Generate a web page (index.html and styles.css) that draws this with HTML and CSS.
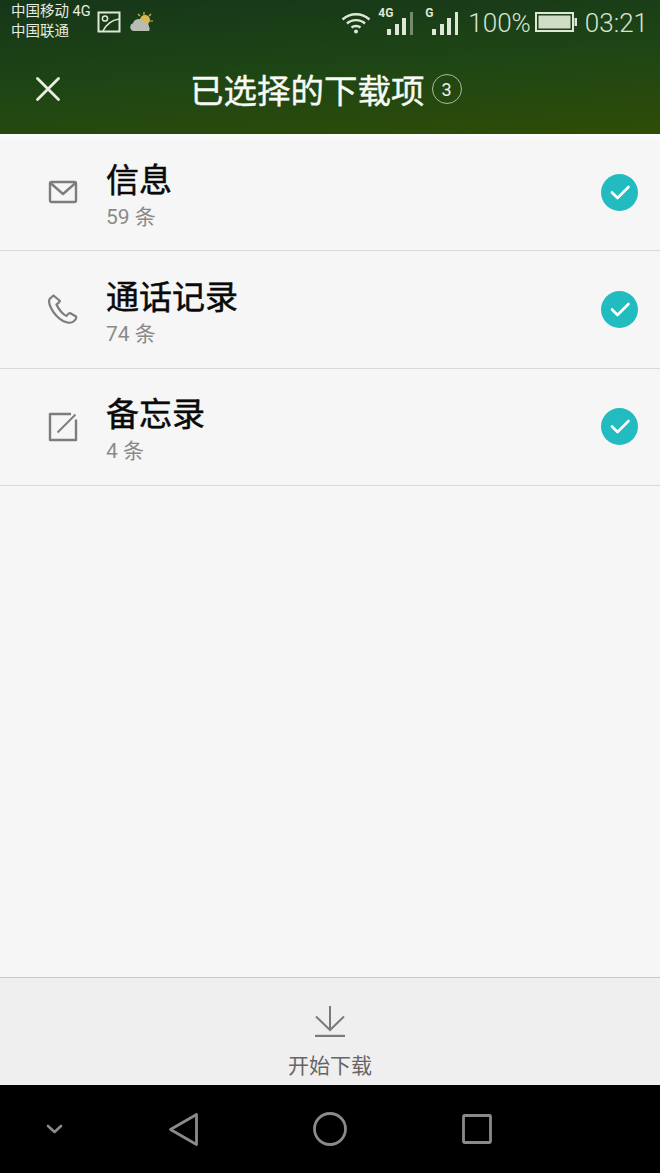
FILE: index.html
```html
<!DOCTYPE html>
<html lang="zh">
<head>
<meta charset="utf-8">
<title>已选择的下载项</title>
<link rel="stylesheet" href="styles.css">
</head>
<body>
<div class="app">
  <header class="header">
    <div class="status">
      <div class="carriers"><div>中国移动 4G</div><div>中国联通</div></div>
      <svg class="ic-photo" width="24" height="22" viewBox="0 0 24 22" fill="none" stroke="#dfe8d8" stroke-width="2"><rect x="1.500" y="1.500" width="21" height="19"/><circle cx="8" cy="7.500" r="2.600" stroke-width="1.500"/><path d="M6 20 C9 14 15 9 22 8" stroke-width="1.600"/></svg>
      <svg class="ic-weather" width="24" height="22" viewBox="0 0 24 22"><g stroke="#d9b64a" stroke-width="1.200"><path d="M14 1v3M21 3l-2 2M23 10h-3M8 3l2 2"/></g><circle cx="15" cy="9" r="5" fill="#dcb64f"/><path d="M4 20a4 4 0 0 1-1-7.800a6 6 0 0 1 11-1a4.500 4.500 0 0 1 5 4.500a4 4 0 0 1 0 4.300z" fill="#b7bdb3"/></svg>
      <div class="status-right">
        <svg class="ic-wifi" width="30" height="23" viewBox="0 0 30 23" fill="none" stroke="#dfe8d8" stroke-width="2.400"><path d="M1.500 8.500C9 1.500 21 1.500 28.500 8.500"/><path d="M6 12.500c5-4.500 13-4.500 18 0"/><path d="M10.500 16.500c2.500-2 6.500-2 9 0"/><circle cx="15" cy="20.500" r="2" fill="#dfe8d8" stroke="none"/></svg>
        <div class="signal sig-4g">
          <span class="net">4G</span>
          <svg width="26" height="23" viewBox="0 0 26 23" fill="#dfe8d8"><rect x="0" y="17" width="4" height="6"/><rect x="8" y="12" width="4" height="11"/><rect x="15" y="6" width="4" height="17"/><rect x="23" y="0" width="3" height="23" opacity=".45"/></svg>
        </div>
        <div class="signal sig-g">
          <span class="net">G</span>
          <svg width="26" height="23" viewBox="0 0 26 23" fill="#dfe8d8"><rect x="0" y="17" width="4" height="6"/><rect x="8" y="12" width="4" height="11"/><rect x="15" y="6" width="4" height="17"/><rect x="23" y="0" width="3" height="23"/></svg>
        </div>
        <span class="pct">100%</span>
        <svg class="ic-batt" width="42" height="20" viewBox="0 0 42 20"><rect x="1" y="1" width="37" height="18" fill="none" stroke="#dfe8d8" stroke-width="2"/><rect x="3.500" y="3.500" width="32" height="13" fill="#cfdcc6"/><rect x="39.500" y="6" width="2.500" height="8" fill="#dfe8d8"/></svg>
        <span class="time">03:21</span>
      </div>
    </div>
    <div class="titlebar">
      <svg class="ic-close" width="24" height="24" viewBox="0 0 24 24" stroke="#e8efe2" stroke-width="2.800" stroke-linecap="round"><path d="M1.500 1.500l21 21M22.500 1.500l-21 21"/></svg>
      <h1 class="title">已选择的下载项</h1>
      <span class="badge">3</span>
    </div>
  </header>

  <main class="list">
    <div class="row">
      <div class="row-icon"><svg width="30" height="26" viewBox="0 0 30 26" fill="none" stroke="#7d7d7d" stroke-width="2.400" stroke-linejoin="round"><rect x="2" y="3" width="26" height="20" rx="1.500"/><path d="M2.500 4L15 15 27.500 4"/></svg></div>
      <div class="row-text"><div class="row-title">信息</div><div class="row-sub">59 条</div></div>
      <svg class="check" width="37" height="37" viewBox="0 0 37 37"><circle cx="18.500" cy="18.500" r="18.500" fill="#22bcc0"/><path d="M11 18.500l5.500 5.500 11-11" fill="none" stroke="#fff" stroke-width="2.600" stroke-linecap="round" stroke-linejoin="round"/></svg>
    </div>
    <div class="row">
      <div class="row-icon"><svg width="30" height="30" viewBox="0 0 30 30" fill="none" stroke="#7d7d7d" stroke-width="2.200" stroke-linejoin="round"><path d="M5.500 1.500L2 4.500C0.500 6.500 1 10 3 14c3 6 7 10 12 13 3 1.500 8 2.500 10.500 0.500 2.500-2 3-4 2.500-5l-6-3.500c-1 0-2.500 1.500-3.500 3-3-1-8-6.500-10-11.500 1-1 3-2 3.500-3.500z"/></svg></div>
      <div class="row-text"><div class="row-title">通话记录</div><div class="row-sub">74 条</div></div>
      <svg class="check" width="37" height="37" viewBox="0 0 37 37"><circle cx="18.500" cy="18.500" r="18.500" fill="#22bcc0"/><path d="M11 18.500l5.500 5.500 11-11" fill="none" stroke="#fff" stroke-width="2.600" stroke-linecap="round" stroke-linejoin="round"/></svg>
    </div>
    <div class="row">
      <div class="row-icon"><svg width="30" height="30" viewBox="0 0 30 30" fill="none" stroke="#7d7d7d" stroke-width="2.400" stroke-linejoin="round"><path d="M28 7.500V28H2V2h21"/><path d="M9.500 20.500L27.500 2.500" stroke-width="2"/></svg></div>
      <div class="row-text"><div class="row-title">备忘录</div><div class="row-sub">4 条</div></div>
      <svg class="check" width="37" height="37" viewBox="0 0 37 37"><circle cx="18.500" cy="18.500" r="18.500" fill="#22bcc0"/><path d="M11 18.500l5.500 5.500 11-11" fill="none" stroke="#fff" stroke-width="2.600" stroke-linecap="round" stroke-linejoin="round"/></svg>
    </div>
  </main>

  <div class="action">
    <svg width="32" height="32" viewBox="0 0 32 32" fill="none" stroke="#7a7a7a" stroke-width="2"><path d="M16 1v24M2 11.500l14 13.500 14-13.500"/><path d="M1 31h30" stroke-width="2.400"/></svg>
    <span class="action-label">开始下载</span>
  </div>

  <nav class="navbar">
    <svg class="nav-down" width="17" height="10" viewBox="0 0 17 10" fill="none" stroke="#8a8a8a" stroke-width="2.600" stroke-linecap="round" stroke-linejoin="round"><path d="M2 2l6.500 6L15 2"/></svg>
    <svg class="nav-back" width="29" height="33" viewBox="0 0 29 33" fill="none" stroke="#8a8a8a" stroke-width="2.800" stroke-linejoin="round"><path d="M27.500 1.500v30L1.500 16.500z"/></svg>
    <svg class="nav-home" width="34" height="34" viewBox="0 0 34 34" fill="none" stroke="#8a8a8a" stroke-width="2.800"><circle cx="17" cy="17" r="15.500"/></svg>
    <svg class="nav-recent" width="30" height="30" viewBox="0 0 30 30" fill="none" stroke="#8a8a8a" stroke-width="2.800" stroke-linejoin="round"><rect x="1.500" y="1.500" width="27" height="27" rx="1"/></svg>
  </nav>
</div>
</body>
</html>
```
FILE: styles.css
```css
* { box-sizing: border-box; }
html, body { margin: 0; padding: 0; }
body {
  width: 660px;
  height: 1173px;
  overflow: hidden;
  background: #f6f6f6;
  font-family: Roboto, "Noto Sans CJK SC", sans-serif;
}
.app { display: flex; flex-direction: column; height: 1173px; }

.header {
  height: 134px;
  flex: none;
  background: linear-gradient(176deg, #163619 0%, #1e4515 50%, #2e4d07 100%);
  color: #fff;
}
.status { display: flex; align-items: center; height: 44px; padding: 0 12px 0 11px; }
.carriers { font-size: 14.500px; line-height: 20px; color: #e6ede0; width: 86px; white-space: nowrap; }
.ic-photo { flex: none; }
.ic-weather { flex: none; margin-left: 9px; }
.status-right { display: flex; align-items: center; margin-left: auto; }
.signal { position: relative; display: flex; align-items: flex-end; height: 24px; margin-top: 1px; }
.sig-4g { width: 35px; margin-left: 7px; padding-left: 9px; }
.sig-g { width: 34px; margin-left: 12px; padding-left: 7px; }
.net { position: absolute; left: 0; top: -4px; font-size: 12px; font-weight: 700; color: #dfe8d8; line-height: 12px; }
.pct { font-size: 26px; font-weight: 300; color: #d9e3d2; margin-left: 9px; line-height: 28px; margin-top: 2px; }
.ic-batt { margin-left: 4px; flex: none; }
.time { font-size: 26px; font-weight: 300; color: #d9e3d2; margin-left: 8px; line-height: 28px; margin-top: 2px; }

.titlebar { display: flex; align-items: center; height: 90px; padding: 0 0 0 36px; }
.ic-close { flex: none; }
.title {
  margin: 5px 0 0 130px;
  font-size: 33.500px;
  font-weight: 400;
  -webkit-text-stroke: 0.4px #f7faf4;
  line-height: 44px;
  color: #f7faf4;
  white-space: nowrap;
}
.badge {
  width: 30px;
  height: 30px;
  margin: 0 0 0 7px;
  border: 1px solid #a9bc9e;
  border-radius: 50%;
  display: flex;
  align-items: center;
  justify-content: center;
  font-size: 18px;
  color: #eef3ea;
}

.list { flex: 1; background: linear-gradient(#fcfcfc, #f6f6f6 8px); }
.row {
  height: 117.300px;
  display: flex;
  align-items: center;
  padding: 0 22px 0 48px;
  border-bottom: 1px solid #d9d9d9;
}
.row-icon { width: 30px; display: flex; justify-content: center; flex: none; }
.row-text { margin-left: 28px; flex: 1; padding-top: 8px; }
.row-title { font-size: 33px; font-weight: 400; -webkit-text-stroke: 0.5px #0a0a0a; line-height: 40px; color: #0a0a0a; }
.row-sub { font-size: 21px; line-height: 30px; color: #8a8a8a; margin-top: 1px; }
.check { flex: none; }

.action {
  height: 108px;
  flex: none;
  background: #efefef;
  border-top: 1px solid #c9c9c9;
  display: flex;
  flex-direction: column;
  align-items: center;
  padding-top: 27px;
}
.action-label { font-size: 21px; line-height: 30px; color: #666; margin-top: 14px; white-space: nowrap; }

.navbar {
  height: 88px;
  flex: none;
  background: #000;
  display: flex;
  align-items: center;
  padding-left: 46px;
}
.nav-back { margin-left: 106px; }
.nav-home { margin-left: 115px; }
.nav-recent { margin-left: 115px; }
```
